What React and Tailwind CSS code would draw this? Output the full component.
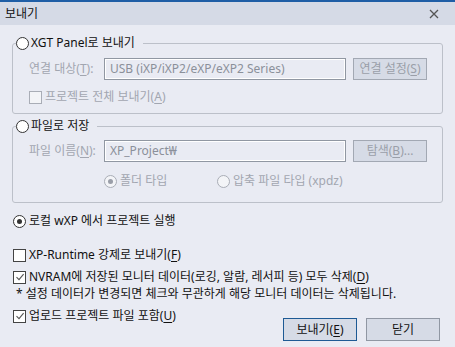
import React from 'react';

const FONT = { fontFamily: '"Noto Sans", "Noto Sans CJK KR", sans-serif' };

function Radio({ checked, disabled }) {
  return (
    <span
      className={`inline-flex w-[13px] h-[13px] rounded-full border items-center justify-center shrink-0 ${
        disabled ? 'border-[#a9adb6] bg-[#f3f4f7]' : 'border-[#333] bg-white'
      }`}
    >
      {checked && <span className={`w-[5px] h-[5px] rounded-full ${disabled ? 'bg-[#9a9ea8]' : 'bg-[#333]'}`} />}
    </span>
  );
}

function Check({ checked, disabled }) {
  return (
    <span
      className={`inline-flex w-[13px] h-[13px] border items-center justify-center shrink-0 ${
        disabled ? 'border-[#a9adb6] bg-[#f3f4f7]' : 'border-[#444] bg-white'
      }`}
    >
      {checked && (
        <svg width="10" height="10" viewBox="0 0 10 10">
          <path d="M1.5 5.2 L4 7.6 L8.6 2.2" fill="none" stroke="#555" strokeWidth="1.1" />
        </svg>
      )}
    </span>
  );
}

const U = ({ children }) => <span className="underline underline-offset-2">{children}</span>;

function Group({ legend, children }) {
  return (
    <fieldset className="mx-[12px] border border-[#bcc0c9] rounded-[3px] p-0">
      <legend className="flex items-center h-[16px] pr-[8px] ml-[3px] text-[12px] text-[#111]">
        <Radio />
        <span className="ml-[2px]">{legend}</span>
      </legend>
      <div className="pl-[16px] pr-[13px]">{children}</div>
    </fieldset>
  );
}

function Field({ label, value, button }) {
  return (
    <div className="flex items-center h-[22px] text-[12px]">
      <span className="w-[75px] text-[#a2a6b0]">{label}</span>
      <div className="w-[242px] h-[22px] border border-[#9097a2] flex items-center">
        <div className="w-full h-full border border-white flex items-center px-[4px] text-[#8b909a]">{value}</div>
      </div>
      <div className="ml-[7px] w-[74px] h-[22px] border border-[#a2a8b3] bg-[#d6dbe6] flex items-center justify-center text-[#9a9fa9]">
        {button}
      </div>
    </div>
  );
}

export default function App() {
  return (
    <div className="w-[455px] h-[347px] bg-[#e9ebf3] flex flex-col overflow-hidden" style={FONT}>
      <div className="h-[25px] bg-[#d5dae6] border-t-2 border-[#1f5ea6] flex items-center justify-between pl-[5px] pr-[16px] text-[12px] text-[#111]">
        <span>보내기</span>
        <svg width="10" height="10" viewBox="0 0 10 10">
          <path d="M1 1 L9 9 M9 1 L1 9" stroke="#555" strokeWidth="1.3" />
        </svg>
      </div>

      <div className="mt-[10px]">
        <Group legend="XGT Panel로 보내기">
          <div className="pt-[7px]">
            <Field label={<>연결 대상(<U>T</U>):</>} value="USB (iXP/iXP2/eXP/eXP2 Series)" button={<>연결 설정(<U>S</U>)</>} />
            <div className="flex items-center gap-[3px] mt-[10px] h-[14px] text-[12px] text-[#a2a6b0]">
              <Check disabled />
              <span>프로젝트 전체 보내기(<U>A</U>)</span>
            </div>
            <div className="h-[9px]" />
          </div>
        </Group>
      </div>

      <div className="mt-[4px]">
        <Group legend="파일로 저장">
          <div className="pt-[6px]">
            <Field label={<>파일 이름(<U>N</U>):</>} value="XP_Project₩" button={<>탐색(<U>B</U>)...</>} />
            <div className="flex items-center h-[14px] mt-[12px] pl-[75px] text-[12px] text-[#a2a6b0]">
              <div className="flex items-center gap-[3px] w-[113px]">
                <Radio checked disabled />
                <span>폴더 타입</span>
              </div>
              <div className="flex items-center gap-[3px]">
                <Radio disabled />
                <span>압축 파일 타입 (xpdz)</span>
              </div>
            </div>
            <div className="h-[14px]" />
          </div>
        </Group>
      </div>

      <div className="flex items-center gap-[3px] ml-[13px] mt-[10px] h-[16px] text-[12px] text-[#111]">
        <Radio checked />
        <span>로컬 wXP 에서 프로젝트 실행</span>
      </div>

      <div className="flex items-center gap-[3px] ml-[13px] mt-[18px] h-[16px] text-[12px] text-[#111]">
        <Check />
        <span>XP-Runtime 강제로 보내기(<U>F</U>)</span>
      </div>

      <div className="flex items-center gap-[3px] ml-[13px] mt-[6px] h-[16px] text-[12px] text-[#111]">
        <Check checked />
        <span>NVRAM에 저장된 모니터 데이터(로깅, 알람, 레서피 등) 모두 삭제(<U>D</U>)</span>
      </div>
      <div className="ml-[16px] mt-[1px] h-[16px] flex items-center text-[12px] text-[#111]">
        * 설정 데이터가 변경되면 체크와 무관하게 해당 모니터 데이터는 삭제됩니다.
      </div>

      <div className="flex items-start justify-between ml-[13px] mr-[15px] mt-[6px] text-[12px] text-[#111]">
        <div className="flex items-center gap-[3px] h-[16px]">
          <Check checked />
          <span>업로드 프로젝트 파일 포함(<U>U</U>)</span>
        </div>
        <div className="flex gap-[9px] mt-[10px]">
          <div className="w-[74px] h-[23px] border border-[#1e5a94] bg-[#d6dbe6] flex items-center justify-center">
            보내기(<U>E</U>)
          </div>
          <div className="w-[74px] h-[23px] border border-[#9097a3] bg-[#d6dbe6] flex items-center justify-center">
            닫기
          </div>
        </div>
      </div>
    </div>
  );
}
